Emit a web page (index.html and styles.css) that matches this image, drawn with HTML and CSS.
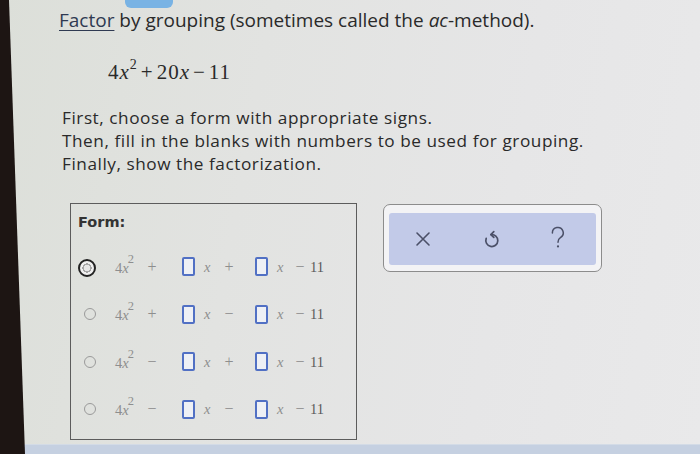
FILE: index.html
```html
<!DOCTYPE html>
<html>
<head>
<meta charset="utf-8">
<link rel="stylesheet" href="styles.css">
</head>
<body>
<div class="edge"></div>
<div class="page">
  <div class="top-btn"></div>
  <div class="content">
    <h1 class="title"><span class="link">Factor</span> by grouping (sometimes called the <i>ac</i>-method).</h1>
    <div class="math">4<i>x</i><sup>2</sup><span class="mop">+</span>20<i>x</i><span class="mop">−</span>11</div>
    <div class="instr">
      <div>First, choose a form with appropriate signs.</div>
      <div>Then, fill in the blanks with numbers to be used for grouping.</div>
      <div>Finally, show the factorization.</div>
    </div>
    <div class="work">
      <div class="form-box">
        <div class="form-label">Form:</div>
        <div class="rows">
          <div class="row">
            <span class="radio-cell"><span class="radio sel"></span></span>
            <span class="lead">4<i>x</i><sup>2</sup></span>
            <span class="op">+</span>
            <span class="grp g1"><span class="blank"></span><i>x</i></span>
            <span class="op">+</span>
            <span class="grp g2"><span class="blank"></span><i>x</i></span>
            <span class="op op3">−</span>
            <span class="const">11</span>
          </div>
          <div class="row">
            <span class="radio-cell"><span class="radio"></span></span>
            <span class="lead">4<i>x</i><sup>2</sup></span>
            <span class="op">+</span>
            <span class="grp g1"><span class="blank"></span><i>x</i></span>
            <span class="op">−</span>
            <span class="grp g2"><span class="blank"></span><i>x</i></span>
            <span class="op op3">−</span>
            <span class="const">11</span>
          </div>
          <div class="row">
            <span class="radio-cell"><span class="radio"></span></span>
            <span class="lead">4<i>x</i><sup>2</sup></span>
            <span class="op">−</span>
            <span class="grp g1"><span class="blank"></span><i>x</i></span>
            <span class="op">+</span>
            <span class="grp g2"><span class="blank"></span><i>x</i></span>
            <span class="op op3">−</span>
            <span class="const">11</span>
          </div>
          <div class="row">
            <span class="radio-cell"><span class="radio"></span></span>
            <span class="lead">4<i>x</i><sup>2</sup></span>
            <span class="op">−</span>
            <span class="grp g1"><span class="blank"></span><i>x</i></span>
            <span class="op">−</span>
            <span class="grp g2"><span class="blank"></span><i>x</i></span>
            <span class="op op3">−</span>
            <span class="const">11</span>
          </div>
        </div>
      </div>
      <div class="tools">
        <div class="tools-inner">
          <span class="ico ico-x">
            <svg width="16" height="16" viewBox="0 0 16 16"><path d="M2 2 L14 14 M14 2 L2 14" stroke="#4b5068" stroke-width="1.6" fill="none" stroke-linecap="round"/></svg>
          </span>
          <span class="ico ico-undo">
            <svg width="16" height="20" viewBox="0 0 16 20"><path d="M7 5.6 A6 6 0 1 1 2.2 9.4" stroke="#4b5068" stroke-width="1.7" fill="none" stroke-linecap="round"/><path d="M9.8 2.6 L6.9 5.6 L9.8 8.4" stroke="#4b5068" stroke-width="1.7" fill="none" stroke-linecap="round" stroke-linejoin="round"/></svg>
          </span>
          <span class="ico ico-help">
            <svg width="18" height="24" viewBox="0 0 18 24"><path d="M3.4 7 A5.4 5.4 0 1 1 11.4 11.6 C9.6 12.7 9 13.7 9 16.2" stroke="#4b5068" stroke-width="1.5" fill="none" stroke-linecap="round"/><circle cx="9" cy="20.4" r="1.1" fill="#4b5068"/></svg>
          </span>
        </div>
      </div>
    </div>
  </div>
  <div class="band"></div>
</div>
</body>
</html>
```
FILE: styles.css
```css
html, body {
  margin: 0;
  padding: 0;
}
body {
  width: 700px;
  height: 454px;
  overflow: hidden;
  position: relative;
  background: linear-gradient(100deg, #dcdfd9 0%, #e2e3e1 35%, #e6e6e7 70%, #e9e9ea 100%);
  font-family: "Open Sans", "Liberation Sans", sans-serif;
  color: #2b2b2b;
}
.edge {
  position: absolute;
  left: 0;
  top: 0;
  width: 26px;
  height: 454px;
  background: #1d1513;
  clip-path: polygon(0 0, 9px 0, 25px 100%, 0 100%);
  z-index: 2;
}
.page {
  display: flex;
  flex-direction: column;
  height: 454px;
}
.top-btn {
  flex: none;
  height: 8px;
  width: 48px;
  margin-left: 125px;
  background: #79b3e4;
  border-radius: 0 0 6px 6px;
}
.content {
  flex: 1;
  padding-left: 59px;
}
.title {
  margin: 0;
  font-size: 19px;
  line-height: 24px;
  font-weight: 400;
  color: #2a2a2a;
}
.title .link {
  color: #2f3a52;
  text-decoration: underline;
  text-decoration-thickness: 1px;
  text-underline-offset: 3px;
}
.math {
  margin: 28px 0 0 49px;
  font-family: "Liberation Serif", serif;
  font-size: 21px;
  line-height: 24px;
  color: #2a2a2a;
  letter-spacing: 1px;
}
.math sup {
  font-size: 14px;
  line-height: 0;
  vertical-align: 10px;
  margin-left: 0;
}
.math .mop {
  margin: 0 3px;
}
.instr {
  margin: 22px 0 0 3px;
  font-size: 17.2px;
  line-height: 23px;
  letter-spacing: 0.55px;
  color: #2a2a2a;
}
.work {
  display: flex;
  align-items: flex-start;
  margin-top: 28px;
}
.form-box {
  margin-left: 11px;
  width: 285px;
  height: 235px;
  border: 1px solid #5c5c5c;
  box-sizing: content-box;
}
.form-label {
  padding: 9px 0 0 7px;
  font-family: "DejaVu Sans", sans-serif;
  font-weight: bold;
  font-size: 14.5px;
  line-height: 18px;
  color: #333;
}
.rows {
  margin-top: 12px;
}
.row {
  display: flex;
  align-items: center;
  height: 47.5px;
  font-family: "Liberation Serif", serif;
  font-size: 14.5px;
  line-height: 14px;
  color: #8e8e8e;
}
.radio-cell {
  width: 34px;
  display: flex;
  justify-content: center;
}
.radio {
  width: 10px;
  height: 10px;
  border: 1.6px solid #9a9a9a;
  border-radius: 50%;
  margin-left: 3px;
}
.radio.sel {
  width: 18px;
  height: 18px;
  box-sizing: border-box;
  border: 2.8px solid #222;
  background: radial-gradient(circle, #e6e6e6 0 3px, #a6a6a6 3px 4.6px, #f0f0f0 4.6px);
  margin-left: -3px;
  margin-top: 3px;
}
.lead {
  width: 25px;
  padding-left: 10px;
}
.lead sup {
  font-size: 12.5px;
  line-height: 0;
  vertical-align: 10px;
  margin-left: -1px;
}
.op {
  width: 24px;
  text-align: center;
  font-size: 16px;
}
.op3 {
  width: 16px;
}
.grp {
  display: flex;
  align-items: center;
}
.grp.g1 {
  width: 35px;
  padding-left: 18px;
}
.grp.g2 {
  width: 37px;
  padding-left: 14px;
}
.blank {
  width: 9px;
  height: 15px;
  border: 2px solid #5170c4;
  border-radius: 2px;
  background: #eef0f5;
  margin-right: 9px;
}
.const {
  padding-left: 2px;
  color: #5a5a5a;
}
.tools {
  margin-left: 26px;
  margin-top: 1px;
  width: 207px;
  height: 52px;
  padding: 8px 5px 6px 5px;
  border: 1px solid #8c8c8c;
  border-radius: 7px;
  background: #f3f3f5;
}
.tools-inner {
  height: 52px;
  background: #c2cae8;
  border-radius: 3px;
  display: flex;
  align-items: center;
}
.ico {
  display: flex;
  align-items: center;
  justify-content: center;
  width: 20px;
}
.ico-x {
  margin-left: 24px;
}
.ico-undo {
  margin-left: 49px;
}
.ico-help {
  margin-left: 46px;
  margin-top: -2px;
}
.band {
  flex: none;
  height: 9px;
  background: #c5d0e1;
  border-top: 1px solid #d3dbe6;
}
```
